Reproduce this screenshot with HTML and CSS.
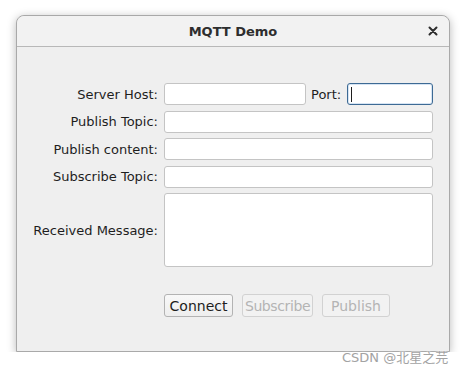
FILE: index.html
```html
<!DOCTYPE html>
<html lang="en">
<head>
    <meta charset="UTF-8">
    <title>MQTT Demo</title>
    <link rel="stylesheet" href="styles.css">
</head>
<body>
    <div class="window">
        <div class="titlebar">
            <span class="title">MQTT Demo</span>
            <span class="close">
                <svg width="10" height="10" viewBox="0 0 10 10"><path d="M1.5 1.5 L8.5 8.5 M8.5 1.5 L1.5 8.5" stroke="#2e2e2e" stroke-width="2" stroke-linecap="round"/></svg>
            </span>
        </div>
        <div class="content">
            <div class="form">
                <label class="label">Server Host:</label>
                <div class="host-row">
                    <input class="field host" type="text">
                    <label class="label port-label">Port:</label>
                    <div class="field port focused"><span class="caret"></span></div>
                </div>
                <label class="label">Publish Topic:</label>
                <input class="field" type="text">
                <label class="label">Publish content:</label>
                <input class="field" type="text">
                <label class="label">Subscribe Topic:</label>
                <input class="field" type="text">
                <label class="label">Received Message:</label>
                <textarea class="field message"></textarea>
            </div>
            <div class="buttons">
                <button class="btn connect">Connect</button>
                <button class="btn subscribe" disabled>Subscribe</button>
                <button class="btn publish" disabled>Publish</button>
            </div>
        </div>
    </div>
    <div class="watermark">CSDN @北星之芫</div>
</body>
</html>
```

FILE: styles.css
```css
body {
    margin: 0;
    padding: 0;
    background-color: #ffffff;
    font-family: 'DejaVu Sans', 'Noto Sans CJK SC', sans-serif;
    font-size: 13px;
    color: #2e2e2e;
}

.window {
    margin: 15px 0 0 16px;
    width: 434px;
    height: 337px;
    box-sizing: border-box;
    border: 1px solid #a9a9a9;
    border-radius: 8px 8px 0 0;
    background-color: #efefef;
    box-shadow: 0 2px 10px rgba(0, 0, 0, 0.28);
    display: flex;
    flex-direction: column;
}

.titlebar {
    height: 30px;
    background-color: #f2f2f2;
    border-bottom: 1px solid #b8b8b8;
    border-radius: 8px 8px 0 0;
    display: flex;
    align-items: center;
    justify-content: center;
    position: relative;
}

.title {
    font-weight: bold;
    font-size: 13px;
    color: #2e2e2e;
}

.close {
    position: absolute;
    right: 11px;
    top: 10px;
    width: 10px;
    height: 10px;
    display: flex;
}

.content {
    padding: 36px 16px 0 16px;
}

.form {
    display: grid;
    grid-template-columns: 125px 269px;
    column-gap: 6px;
    row-gap: 5.5px;
}

.label {
    display: flex;
    align-items: center;
    justify-content: flex-end;
    color: #1e1e1e;
}

.host-row {
    display: flex;
    align-items: center;
}

.field {
    box-sizing: border-box;
    height: 22px;
    margin: 0;
    border: 1px solid #c4c4c4;
    border-radius: 3px;
    background-color: #ffffff;
    font-family: inherit;
    font-size: 13px;
    outline: none;
}

.host {
    width: 142px;
}

.port-label {
    margin: 0 6px 0 5px;
}

.port {
    width: 86px;
    display: flex;
    align-items: center;
    padding-left: 3px;
}

.focused {
    border-color: #3d6a94;
    box-shadow: inset 0 0 0 1px #d6e4f3;
}

.caret {
    width: 1px;
    height: 15px;
    background-color: #1e1e1e;
}

.message {
    height: 74px;
    resize: none;
}

.buttons {
    display: flex;
    gap: 9px;
    margin: 27px 0 0 131px;
}

.btn {
    box-sizing: border-box;
    height: 23px;
    padding: 0;
    border: 1px solid #b3b3b3;
    border-radius: 3px;
    background: linear-gradient(#f8f8f8, #eeeeee);
    font-family: inherit;
    font-size: 14px;
    color: #1e1e1e;
}

.btn:disabled {
    color: #b4b4b4;
    border-color: #d2d2d2;
    background: #f2f2f2;
}

.connect {
    width: 69px;
}

.subscribe {
    width: 71px;
    letter-spacing: -0.4px;
}

.publish {
    width: 68px;
}

.watermark {
    position: absolute;
    left: 342px;
    top: 347px;
    font-size: 13px;
    color: #a3a3a3;
    text-shadow: 0 0 2px #ffffff, 0 0 2px #ffffff;
    font-family: 'DejaVu Sans', 'Noto Sans CJK SC', sans-serif;
}
```
